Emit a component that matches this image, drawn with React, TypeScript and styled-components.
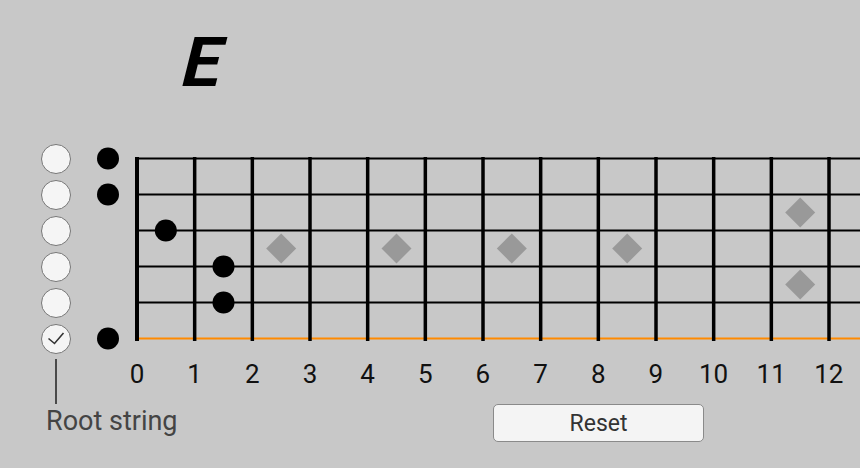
import React, { useState } from 'react';
import styled, { createGlobalStyle } from 'styled-components';

const GlobalStyle = createGlobalStyle`
  html, body { margin: 0; padding: 0; background: #c8c8c8; }
  body { font-family: Roboto, "Noto Sans", sans-serif; }
  * { box-sizing: border-box; }
`;

const Page = styled.div`
  width: 860px;
  height: 468px;
  overflow: hidden;
  display: flex;
  flex-direction: column;
  background: #c8c8c8;
`;

const Header = styled.div`
  padding: 28px 0 0 178px;
  height: 102px;
  line-height: 69px;
`;

const ChordName = styled.span`
  display: inline-block;
  font: normal 700 69px/69px Roboto, sans-serif;
  color: #000;
  transform-origin: 0 58px;
  transform: skewX(-14deg);
`;

const Board = styled.div`
  display: flex;
  margin-top: 42px;
  padding-left: 41px;
`;

const RootColumn = styled.div`
  display: flex;
  flex-direction: column;
  width: 30px;
`;

const Circles = styled.div`
  display: flex;
  flex-direction: column;
  gap: 6px;
`;

const RootRadio = styled.button`
  width: 30px;
  height: 30px;
  border-radius: 50%;
  border: 1px solid #777;
  background: #f5f5f5;
  padding: 0;
  display: flex;
  align-items: center;
  justify-content: center;
  cursor: pointer;
`;

const Stem = styled.div`
  width: 1.5px;
  height: 45px;
  margin: 5px 0 0 14.25px;
  background: #4a4a4a;
`;

const RootLabel = styled.div`
  margin: 2px 0 0 5px;
  white-space: nowrap;
  font-size: 27px;
  line-height: 30px;
  color: #444;
`;

const Diagram = styled.div`
  display: flex;
  flex-direction: column;
  margin-left: 15px;
`;

const Fretboard = styled.svg`
  display: block;
  overflow: visible;
`;

const Numbers = styled.div`
  display: grid;
  grid-template-columns: repeat(13, 57.667px);
  margin: 15px 0 0 22.17px;
`;

const FretNum = styled.span`
  text-align: center;
  font-size: 26px;
  line-height: 30px;
  color: #111;
`;

const ResetButton = styled.button`
  margin: 15px 0 0 407px;
  width: 211px;
  height: 38px;
  border: 1px solid #8a8a8a;
  border-radius: 5px;
  background: #f4f4f4;
  font-family: Roboto, sans-serif;
  font-size: 23px;
  color: #333;
  padding: 0;
  cursor: pointer;
`;

const FRET_W = 57.667;
const fretX = (k: number) => 51 + FRET_W * k;
const stringY = (i: number) => 14.5 + 36 * i;
const midX = (k: number) => (fretX(k - 1) + fretX(k)) / 2;

// string index (0 = top string) -> fret (0 = open)
const chord: number[] = [0, 0, 1, 2, 2, 0];

const markers: { fret: number; y: number }[] = [
  { fret: 3, y: 104.5 },
  { fret: 5, y: 104.5 },
  { fret: 7, y: 104.5 },
  { fret: 9, y: 104.5 },
  { fret: 12, y: 68.5 },
  { fret: 12, y: 140.5 },
];

const Diamond = ({ cx, cy }: { cx: number; cy: number }) => (
  <polygon
    points={`${cx},${cy - 15} ${cx + 15},${cy} ${cx},${cy + 15} ${cx - 15},${cy}`}
    fill="#999"
  />
);

const Check = () => (
  <svg width="20" height="16" viewBox="0 0 20 16">
    <path d="M2.5 7.5 L8.5 12.5 L17.5 2" fill="none" stroke="#333" strokeWidth="1.6" />
  </svg>
);

export default function App() {
  const [root, setRoot] = useState(5);
  const width = 774;
  return (
    <>
      <GlobalStyle />
      <Page>
        <Header>
          <ChordName>E</ChordName>
        </Header>
        <Board>
          <RootColumn>
            <Circles>
              {[0, 1, 2, 3, 4, 5].map((i) => (
                <RootRadio key={i} onClick={() => setRoot(i)} aria-label={`string ${i + 1}`}>
                  {root === i && <Check />}
                </RootRadio>
              ))}
            </Circles>
            <Stem />
            <RootLabel>Root string</RootLabel>
          </RootColumn>
          <Diagram>
            <Fretboard width={width} height={200} viewBox={`0 0 ${width} 200`}>
              {markers.map((m, i) => (
                <Diamond key={i} cx={midX(m.fret)} cy={m.y} />
              ))}
              {[0, 1, 2, 3, 4, 5].map((i) => (
                <line
                  key={`s${i}`}
                  x1={fretX(0)}
                  x2={width}
                  y1={stringY(i)}
                  y2={stringY(i)}
                  stroke={i === 5 ? '#ff8a00' : '#000'}
                  strokeWidth={2}
                />
              ))}
              {Array.from({ length: 14 }, (_, k) => (
                <line
                  key={`f${k}`}
                  x1={fretX(k)}
                  x2={fretX(k)}
                  y1={13}
                  y2={197}
                  stroke="#000"
                  strokeWidth={k === 0 ? 4 : 3.5}
                />
              ))}
              {chord.map((f, i) => (
                <circle
                  key={`d${i}`}
                  cx={f === 0 ? 22 : midX(f)}
                  cy={stringY(i)}
                  r={11}
                  fill="#000"
                />
              ))}
            </Fretboard>
            <Numbers>
              {Array.from({ length: 13 }, (_, k) => (
                <FretNum key={k}>{k}</FretNum>
              ))}
            </Numbers>
            <ResetButton onClick={() => setRoot(5)}>Reset</ResetButton>
          </Diagram>
        </Board>
      </Page>
    </>
  );
}
